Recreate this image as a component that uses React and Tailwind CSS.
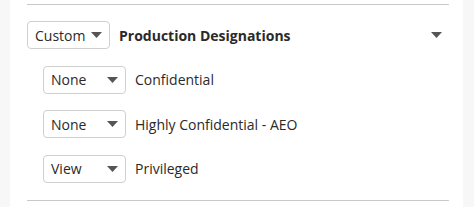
import React from "react";

function Caret({ className }) {
  return (
    <svg width="11" height="6" viewBox="0 0 11 6" className={className}>
      <path d="M0 0 L11 0 L5.5 6 Z" fill="#555" />
    </svg>
  );
}

function Picker({ value }) {
  return (
    <div className="flex items-center justify-between w-[83px] h-[28px] pl-[7px] pr-[7px] border border-[#cfcfcf] rounded-[4px] bg-white text-[14px] text-[#2a2a2a]">
      <span>{value}</span>
      <Caret />
    </div>
  );
}

function Row({ value, label }) {
  return (
    <div className="flex items-center gap-[9px] pl-[16px]">
      <Picker value={value} />
      <span className="text-[14px] text-[#2a2a2a]">{label}</span>
    </div>
  );
}

export default function App() {
  return (
    <div
      className="flex w-[474px] h-[207px] bg-white"
      style={{ fontFamily: '"Open Sans", "Liberation Sans", sans-serif' }}
    >
      <div className="w-[10px] bg-[#f7f7f7]" />

      <div className="flex-1 pl-[17px] pr-[14px] pt-[4px]">
        <div className="border-t border-b border-[#c9c9c9] pt-[16px] pb-[17px] flex flex-col gap-[16.5px]">
          <div className="flex items-center gap-[9px]">
            <Picker value="Custom" />
            <span className="text-[14px] font-bold text-[#2a2a2a]">Production Designations</span>
            <Caret className="ml-auto mr-[7px]" />
          </div>
          <Row value="None" label="Confidential" />
          <Row value="None" label="Highly Confidential - AEO" />
          <Row value="View" label="Privileged" />
        </div>
      </div>

      <div className="w-[11px] bg-[#f7f7f7]" />
    </div>
  );
}
